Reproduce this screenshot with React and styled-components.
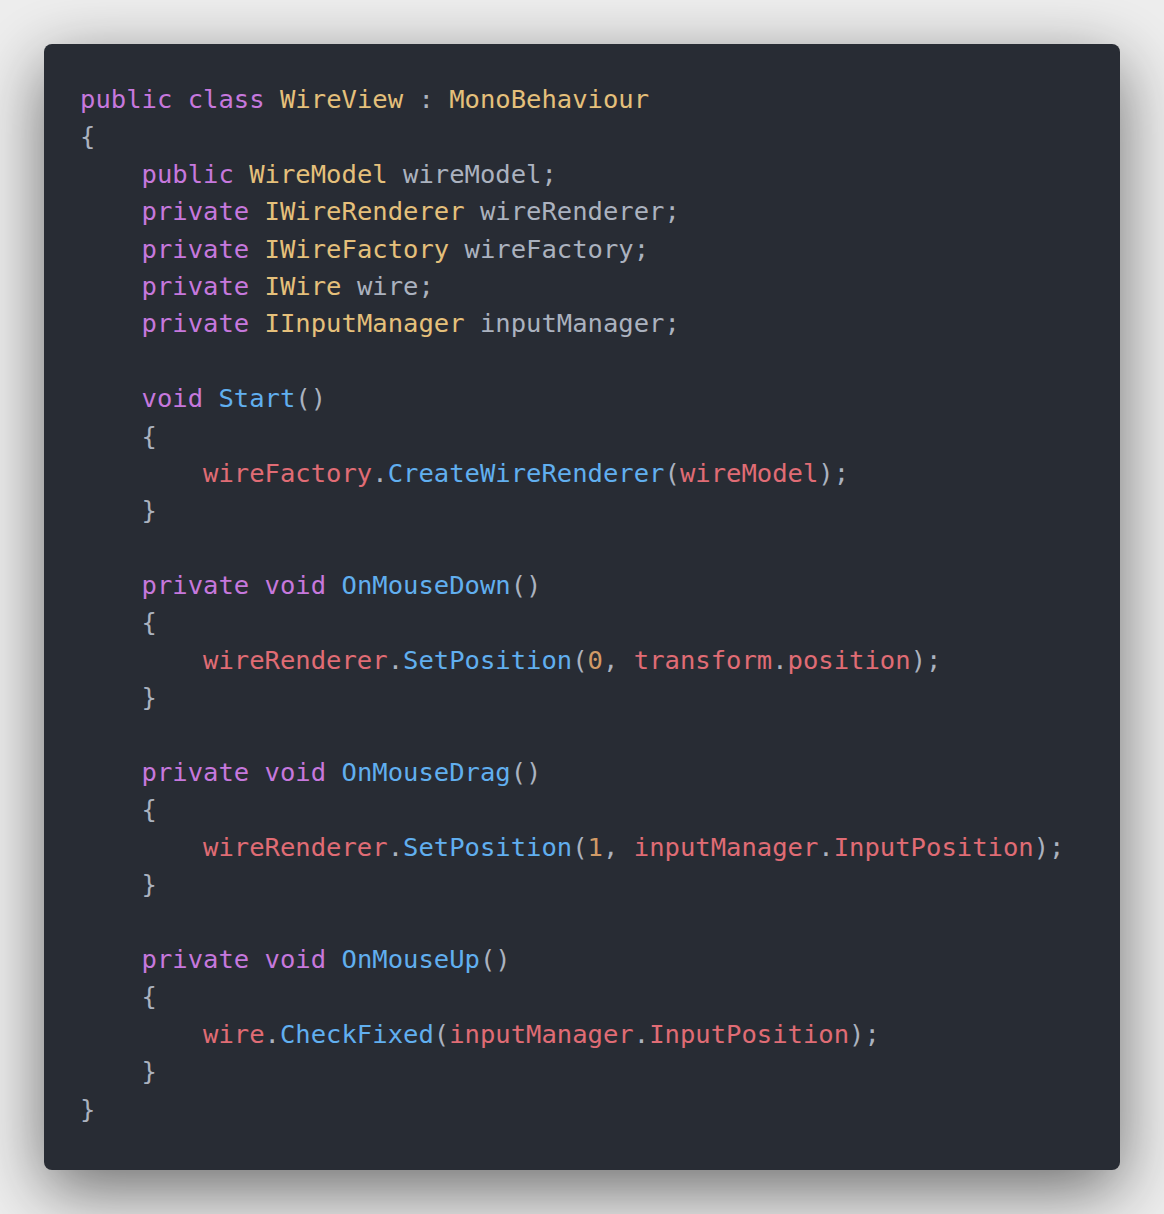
import React from 'react';
import styled, { createGlobalStyle } from 'styled-components';

const GlobalStyle = createGlobalStyle`
  html, body {
    margin: 0;
    padding: 0;
    background: #eeeeee;
  }
`;

const Page = styled.div`
  padding: 44px;
  box-sizing: border-box;
  min-height: 1214px;
`;

const Card = styled.pre`
  margin: 0;
  background: #282c34;
  border-radius: 8px;
  box-shadow: 0 20px 68px rgba(0, 0, 0, 0.55);
  padding: 37px 36px 40px;
  height: 1126px;
  box-sizing: border-box;
  font-family: "DejaVu Sans Mono", "Liberation Mono", monospace;
  font-size: 25.56px;
  line-height: 37.4px;
  color: #abb2bf;
  overflow: hidden;
`;

const Line = styled.div`
  height: 37.4px;
  white-space: pre;
`;

const colors = {
  kw: '#c678dd',
  type: '#e5c07b',
  fn: '#61afef',
  var: '#e06c75',
  num: '#d19a66',
  p: '#abb2bf',
};

const Token = styled.span`
  color: ${(p) => colors[p.$kind] || colors.p};
`;

const code = [
  [['kw', 'public'], ['p', ' '], ['kw', 'class'], ['p', ' '], ['type', 'WireView'], ['p', ' : '], ['type', 'MonoBehaviour']],
  [['p', '{']],
  [['p', '    '], ['kw', 'public'], ['p', ' '], ['type', 'WireModel'], ['p', ' wireModel;']],
  [['p', '    '], ['kw', 'private'], ['p', ' '], ['type', 'IWireRenderer'], ['p', ' wireRenderer;']],
  [['p', '    '], ['kw', 'private'], ['p', ' '], ['type', 'IWireFactory'], ['p', ' wireFactory;']],
  [['p', '    '], ['kw', 'private'], ['p', ' '], ['type', 'IWire'], ['p', ' wire;']],
  [['p', '    '], ['kw', 'private'], ['p', ' '], ['type', 'IInputManager'], ['p', ' inputManager;']],
  [],
  [['p', '    '], ['kw', 'void'], ['p', ' '], ['fn', 'Start'], ['p', '()']],
  [['p', '    {']],
  [['p', '        '], ['var', 'wireFactory'], ['p', '.'], ['fn', 'CreateWireRenderer'], ['p', '('], ['var', 'wireModel'], ['p', ');']],
  [['p', '    }']],
  [],
  [['p', '    '], ['kw', 'private'], ['p', ' '], ['kw', 'void'], ['p', ' '], ['fn', 'OnMouseDown'], ['p', '()']],
  [['p', '    {']],
  [['p', '        '], ['var', 'wireRenderer'], ['p', '.'], ['fn', 'SetPosition'], ['p', '('], ['num', '0'], ['p', ', '], ['var', 'transform'], ['p', '.'], ['var', 'position'], ['p', ');']],
  [['p', '    }']],
  [],
  [['p', '    '], ['kw', 'private'], ['p', ' '], ['kw', 'void'], ['p', ' '], ['fn', 'OnMouseDrag'], ['p', '()']],
  [['p', '    {']],
  [['p', '        '], ['var', 'wireRenderer'], ['p', '.'], ['fn', 'SetPosition'], ['p', '('], ['num', '1'], ['p', ', '], ['var', 'inputManager'], ['p', '.'], ['var', 'InputPosition'], ['p', ');']],
  [['p', '    }']],
  [],
  [['p', '    '], ['kw', 'private'], ['p', ' '], ['kw', 'void'], ['p', ' '], ['fn', 'OnMouseUp'], ['p', '()']],
  [['p', '    {']],
  [['p', '        '], ['var', 'wire'], ['p', '.'], ['fn', 'CheckFixed'], ['p', '('], ['var', 'inputManager'], ['p', '.'], ['var', 'InputPosition'], ['p', ');']],
  [['p', '    }']],
  [['p', '}']],
];

export default function App() {
  return (
    <>
      <GlobalStyle />
      <Page>
        <Card>
          {code.map((line, i) => (
            <Line key={i}>
              {line.map(([kind, text], j) => (
                <Token key={j} $kind={kind}>{text}</Token>
              ))}
            </Line>
          ))}
        </Card>
      </Page>
    </>
  );
}
